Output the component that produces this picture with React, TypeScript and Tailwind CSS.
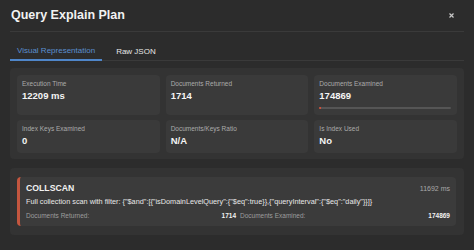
const STATS = [
  {label: 'Execution Time', value: '12209 ms'},
  {label: 'Documents Returned', value: '1714'},
  {label: 'Documents Examined', value: '174869', progress: 1714 / 174869},
  {label: 'Index Keys Examined', value: '0'},
  {label: 'Documents/Keys Ratio', value: 'N/A'},
  {label: 'Is Index Used', value: 'No'},
];

const FILTER =
  '{"$and":[{"isDomainLevelQuery":{"$eq":true}},{"queryInterval":{"$eq":"daily"}}]}';

export default function App() {
  return (
    <div className="w-[474px] h-[250px] overflow-hidden bg-[#2c2c2c] px-[10px] font-['Liberation_Sans',Arial,sans-serif] text-white">
      {/* Header */}
      <div className="flex items-center justify-between h-[32px] pl-px pr-[10px] border-b border-[#3a3a3a]">
        <h1 className="text-[12.5px] font-bold leading-none text-[#f2f2f2]">
          Query Explain Plan
        </h1>
        <svg width="5" height="5" viewBox="0 0 5 5" className="text-[#c8c8c8]">
          <path d="M0.5 0.5L4.5 4.5M4.5 0.5L0.5 4.5" stroke="currentColor" strokeWidth="1.2" />
        </svg>
      </div>

      {/* Tabs */}
      <div className="mt-[14px] flex gap-[7px] border-b border-[#3a3a3a]">
        <button className="px-[7px] pb-[3px] text-[8px] leading-[10px] text-[#5b8fcf] border-b-2 border-[#4f86c9] -mb-px">
          Visual Representation
        </button>
        <button className="px-[7px] pb-[3px] text-[8px] leading-[10px] text-[#e6e6e6]">
          Raw JSON
        </button>
      </div>

      {/* Stats */}
      <div className="mt-[7px] rounded-sm bg-[#333333] p-[7px] pb-[6px] grid grid-cols-3 gap-x-[6px] gap-y-[5px]">
        {STATS.map((s) => (
          <div key={s.label} className="rounded-sm bg-[#3a3a3a] px-[5px] pt-[5px] pb-[6px]">
            <div className="text-[6.5px] leading-[8px] text-[#ababab]">{s.label}</div>
            <div className="mt-[2px] text-[9.5px] leading-[12px] font-bold text-[#f4f4f4]">
              {s.value}
            </div>
            {s.progress !== undefined && (
              <div className="mt-[5px] h-[2px] mr-[1px] bg-[#555555] rounded-full overflow-hidden">
                <div
                  className="h-full bg-[#d0503a]"
                  style={{width: `${Math.max(s.progress * 100, 1)}%`}}
                />
              </div>
            )}
          </div>
        ))}
      </div>

      {/* Plan stages */}
      <div className="mt-[9px] rounded-sm bg-[#333333] pl-[7px] pr-[8px] py-[9px]">
        <div className="rounded-sm bg-[#3b3b3b] border-l-[3px] border-[#c4563f] pl-[6px] pr-[6px] pt-[6px] pb-[6px]">
          <div className="flex items-center justify-between">
            <span className="text-[8.7px] leading-[11px] font-bold text-[#f2f2f2]">COLLSCAN</span>
            <span className="text-[7px] leading-[11px] text-[#a9a9a9]">11692 ms</span>
          </div>
          <div className="mt-[3px] text-[7.3px] leading-[9px] text-[#e8e8e8] whitespace-nowrap">
            Full collection scan with filter: {FILTER}
          </div>
          <div className="mt-[5px] grid grid-cols-2 gap-x-[4px] text-[6.5px] leading-[9px]">
            <div className="flex justify-between">
              <span className="text-[#9d9d9d]">Documents Returned:</span>
              <span className="font-bold text-[#f2f2f2]">1714</span>
            </div>
            <div className="flex justify-between">
              <span className="text-[#9d9d9d]">Documents Examined:</span>
              <span className="font-bold text-[#f2f2f2]">174869</span>
            </div>
          </div>
        </div>
      </div>
    </div>
  );
}
